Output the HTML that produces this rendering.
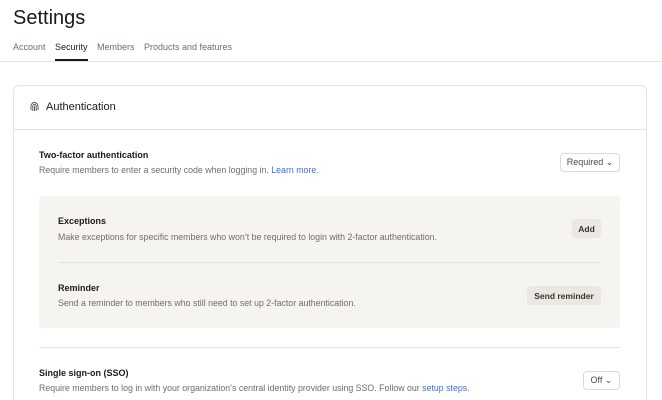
<!DOCTYPE html>
<html style="width:662px;height:400px;overflow:hidden"><head><style>
*{box-sizing:border-box;margin:0;padding:0}
body{width:662px;height:400px;overflow:hidden;background:#fff;font-family:"Liberation Sans",sans-serif;color:#1e1919;position:relative}
.a{position:absolute;white-space:nowrap}
.t{font-size:8.8px;color:#736c64}
.b{font-size:9px;font-weight:bold;color:#1e1919}
.btn{position:absolute;border:1px solid #ddd9d4;border-radius:4px;font-size:9px;color:#52493f;display:flex;align-items:center;justify-content:center;background:#fff}
.gb{position:absolute;background:#ebe8e3;border-radius:4px;font-size:8.5px;font-weight:bold;color:#3a332c;display:flex;align-items:center;justify-content:center}
a{color:#3b6fe0;text-decoration:none}
</style></head><body>
<div class="a" style="left:13px;top:7px;font-size:20px;color:#1e1919">Settings</div>
<div class="a t" style="left:13px;top:42px;font-size:9px">Account</div>
<div class="a" style="left:55px;top:42px;font-size:9px;color:#1e1919">Security</div>
<div class="a t" style="left:97px;top:42px;font-size:9px">Members</div>
<div class="a t" style="left:144px;top:42px;font-size:9px">Products and features</div>
<div class="a" style="left:55px;top:59px;width:33px;height:2px;background:#1e1919"></div>
<div class="a" style="left:0;top:61px;width:662px;height:1px;background:#e6e3df"></div>
<div class="a" style="left:13px;top:85px;width:634px;height:315px;border:1px solid #e6e3df;border-bottom:none;border-radius:6px 6px 0 0"></div>
<div class="a" style="left:14px;top:129px;width:632px;height:1px;background:#e6e3df"></div>
<svg class="a" style="left:29px;top:101px" width="11" height="11" viewBox="0 0 11 11" fill="none" stroke="#52493f" stroke-width="0.9"><path d="M2 9V5a3.5 3.5 0 0 1 7 0v4M3.8 10V5.2a1.7 1.7 0 0 1 3.4 0V10M5.5 10V5"/></svg>
<div class="a" style="left:46px;top:101px;font-size:11px">Authentication</div>
<div class="a b" style="left:39px;top:150px">Two-factor authentication</div>
<div class="a t" style="left:39px;top:165px">Require members to enter a security code when logging in. <a>Learn more.</a></div>
<div class="btn" style="left:560px;top:153px;width:60px;height:19px">Required ⌄</div>
<div class="a" style="left:39px;top:196px;width:581px;height:132px;background:#f6f4f1;border-radius:3px"></div>
<div class="a b" style="left:58px;top:216px">Exceptions</div>
<div class="a t" style="left:58px;top:232px">Make exceptions for specific members who won’t be required to login with 2-factor authentication.</div>
<div class="gb" style="left:572px;top:219px;width:29px;height:19px">Add</div>
<div class="a" style="left:58px;top:262px;width:543px;height:1px;background:#e2ded8"></div>
<div class="a b" style="left:58px;top:283px">Reminder</div>
<div class="a t" style="left:58px;top:298px">Send a reminder to members who still need to set up 2-factor authentication.</div>
<div class="gb" style="left:527px;top:286px;width:74px;height:19px">Send reminder</div>
<div class="a" style="left:39px;top:347px;width:581px;height:1px;background:#e6e3df"></div>
<div class="a b" style="left:39px;top:368px">Single sign-on (SSO)</div>
<div class="a t" style="left:39px;top:383px">Require members to log in with your organization’s central identity provider using SSO. Follow our <a>setup steps.</a></div>
<div class="btn" style="left:583px;top:371px;width:37px;height:19px">Off ⌄</div>
</body></html>
